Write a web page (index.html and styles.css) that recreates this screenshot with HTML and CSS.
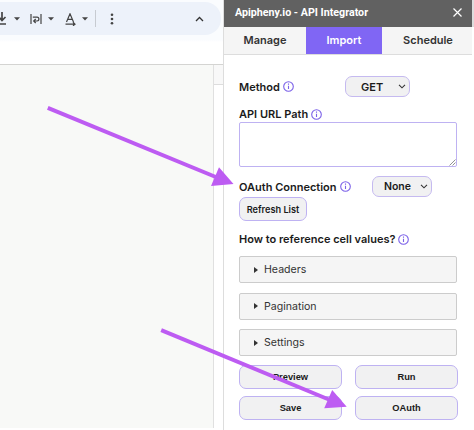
FILE: index.html
```html
<!DOCTYPE html>
<html lang="en">
<head>
<meta charset="utf-8">
<title>Apipheny.io - API Integrator</title>
<link rel="stylesheet" href="styles.css">
</head>
<body>
<svg class="defs" width="0" height="0">
  <symbol id="info" viewBox="0 0 11 11"><circle cx="5.5" cy="5.5" r="4.8" fill="none" stroke="#7b61e8" stroke-width="1.1"/><path d="M5.5 4.8v3.3M5.5 2.6v1.2" stroke="#7b61e8" stroke-width="1.1"/></symbol>
  <symbol id="chev" viewBox="0 0 8 5"><path d="M1 .8l3 3 3-3" fill="none" stroke="#333" stroke-width="1.1"/></symbol>
  <symbol id="drop" viewBox="0 0 6 4"><path d="M0 .3h6L3 3.6z" fill="#444"/></symbol>
</svg>
<div class="app">
  <main class="editor">
    <div class="toolbar">
      <svg class="tool down" width="10" height="14" viewBox="0 0 10 14"><path d="M4 0v8M.8 5l3.2 3.5L7.500 5M0 12h8" fill="none" stroke="#444" stroke-width="1.7"/></svg>
      <svg class="drop d1" width="6" height="4"><use href="#drop"/></svg>
      <svg class="tool wrap" width="12" height="12" viewBox="0 0 12 12"><path d="M1 1v10M11 1v10M2.800 4.200h4.200a1.900 1.900 0 0 1 0 3.800H4M5.700 6L3.700 8l2 2" fill="none" stroke="#444" stroke-width="1.2"/></svg>
      <svg class="drop d2" width="6" height="4"><use href="#drop"/></svg>
      <svg class="tool rotate" width="12" height="13" viewBox="0 0 12 13"><path d="M1.500 9L5 .8 8.500 9M2.700 6.300h4.600M.5 11.200h9M8 9.300l2 1.900-2 1.600" fill="none" stroke="#444" stroke-width="1.2"/></svg>
      <svg class="drop d3" width="6" height="4"><use href="#drop"/></svg>
      <i class="divider"></i>
      <svg class="more" width="4" height="12" viewBox="0 0 4 12"><g fill="#444"><circle cx="2" cy="1.700" r="1.300"/><circle cx="2" cy="6" r="1.300"/><circle cx="2" cy="10.300" r="1.300"/></g></svg>
      <svg class="collapse" width="9" height="6" viewBox="0 0 9 6"><path d="M1 5l3.500-3.500L8 5" fill="none" stroke="#333" stroke-width="1.300"/></svg>
    </div>
    <div class="sheet"><div class="canvas"></div><div class="scroll"><i></i></div></div>
  </main>
  <aside class="panel">
    <header><span>Apipheny.io - API Integrator</span><svg width="9" height="9" viewBox="0 0 9 9"><path d="M.5.5l8 8M8.500.5l-8 8" stroke="#fff" stroke-width="1.200"/></svg></header>
    <nav><a class="manage">Manage</a><a class="on">Import</a><a class="schedule">Schedule</a></nav>
    <div class="form">
      <div class="row method"><b>Method</b><svg class="info" width="11" height="11"><use href="#info"/></svg><div class="select get"><span>GET</span><svg width="8" height="5"><use href="#chev"/></svg></div></div>
      <div class="row url"><b>API URL Path</b><svg class="info" width="11" height="11"><use href="#info"/></svg></div>
      <div class="textarea"><svg width="7" height="7" viewBox="0 0 7 7"><path d="M.5 6.500l6-6M3.500 6.500l3-3" stroke="#777" stroke-width=".8"/></svg></div>
      <div class="row oauth"><b>OAuth Connection</b><svg class="info" width="11" height="11"><use href="#info"/></svg><div class="select none"><span>None</span><svg width="8" height="5"><use href="#chev"/></svg></div></div>
      <button class="refresh">Refresh List</button>
      <div class="row how"><b>How to reference cell values?</b><svg class="info" width="11" height="11"><use href="#info"/></svg></div>
      <div class="sections">
        <div><i></i><span>Headers</span></div>
        <div><i></i><span>Pagination</span></div>
        <div><i></i><span>Settings</span></div>
      </div>
      <div class="actions"><button>Preview</button><button>Run</button><button>Save</button><button>OAuth</button></div>
    </div>
  </aside>
</div>
<svg class="arrows" width="474" height="430" viewBox="0 0 474 430">
  <g stroke="#bd5cf2" stroke-width="4"><path d="M47.800 107.800L217 177.500"/><path d="M161.200 330.200L330 400"/></g>
  <g fill="#bd5cf2"><path d="M233.500 184L219 167.300 211 186z"/><path d="M346.700 406.700L332.200 390 324.200 408.300z"/></g>
</svg>
</body>
</html>
```
FILE: styles.css
```css
* { box-sizing: border-box; }
body { margin: 0; width: 474px; height: 430px; overflow: hidden; background: #fff; font-family: Inter, "Liberation Sans", sans-serif; color: #1b1b1b; }
.defs { position: absolute; }
.app { display: flex; height: 430px; }
svg { flex: none; display: block; }
.editor { width: 223px; display: flex; flex-direction: column; background: linear-gradient(#fafcfe 0 40px, #fff 42px); }
.toolbar { height: 33px; margin: 2px 2px 29px 0; background: #edf2fa; border-radius: 0 16px 16px 0; display: flex; align-items: center; }
.down { margin-top: 1px; margin-left: -2px; width: 10px; }
.d1 { margin-left: 6px; }
.wrap { margin-left: 10px; }
.d2 { margin-left: 6px; }
.rotate { margin-left: 11px; margin-top: 1px; }
.d3 { margin-left: 5px; }
.divider { width: 1px; height: 17px; margin-left: 7px; background: #c7cbd1; }
.more { margin-left: 14px; }
.collapse { margin-left: auto; margin-right: 17px; }
.sheet { flex: 1; display: flex; border-top: 1px solid #d4d4d2; }
.canvas { width: 214px; height: 363px; background: #f8f9f7; border-right: 1px solid #e0e0e0; }
.scroll { flex: 1; }
.scroll i { display: block; height: 20px; background: #f8f8f8; border-bottom: 1px solid #ddd; }
.panel { width: 251px; border-left: 1px solid #ddd; }
header { width: 250px; height: 27px; background: #616161; color: #fff; border-right: 2px solid #ddd; display: flex; align-items: center; justify-content: space-between; padding: 0 10px 3px 11px; font: 700 10.7px Roboto, sans-serif; }
nav { width: 248px; height: 28px; display: flex; background: #f5f5f5; border-bottom: 1px solid #ddd; font-size: 11px; font-weight: 600; line-height: 27px; text-align: center; color: #333; }
nav a { height: 27px; }
.manage { width: 82px; }
.on { width: 76px; background: #8066f4; color: #fff; }
.schedule { width: 90px; padding-left: 2px; }
.form { width: 233px; padding: 21px 0 0 15px; }
.row { display: flex; align-items: center; white-space: nowrap; }
.row b { font-size: 11px; font-weight: 600; line-height: 16px; }
.info { margin-left: 3px; }
.select { height: 21px; border: 1px solid #c5baf0; border-radius: 7px; background: #f1f1f2; display: flex; align-items: center; justify-content: space-between; font-weight: 600; font-size: 11px; padding: 0 3px 0 15px; margin-left: auto; }
.get { width: 65px; margin-right: 47px; }
.none { width: 60px; margin-right: 25px; padding: 0 3px 0 11px; font-size: 10.5px; }
.method { height: 21px; }
.url { height: 16px; margin-top: 9px; }
.textarea { height: 45px; border: 1px solid #beb2f2; border-radius: 2px; display: flex; align-items: flex-end; justify-content: flex-end; background: #fff; }
.oauth { height: 21px; margin-top: 9px; }
button { appearance: none; margin: 0; padding: 0; border: 1px solid #beb2f2; border-radius: 7px; background: #f1f1f2; color: #1b1b1b; height: 24px; font: 700 9.3px "Liberation Sans", sans-serif; }
.refresh { width: 68px; font: 600 9.2px Inter, sans-serif; display: block; }
.how { height: 16px; margin-top: 10px; }
.sections { margin-top: 9px; display: grid; gap: 9.5px; }
.sections div { height: 27px; border: 1px solid #ccc; border-radius: 2px; background: #f5f5f5; display: flex; align-items: center; padding-left: 14px; font-size: 10.6px; color: #333; }
.sections i { border-left: 4px solid #333; border-top: 3px solid transparent; border-bottom: 3px solid transparent; margin-right: 6px; }
.actions { display: grid; grid-template-columns: 103px 103px; gap: 7px 13px; margin-top: 9px; }
.arrows { position: absolute; left: 0; top: 0; }
```
